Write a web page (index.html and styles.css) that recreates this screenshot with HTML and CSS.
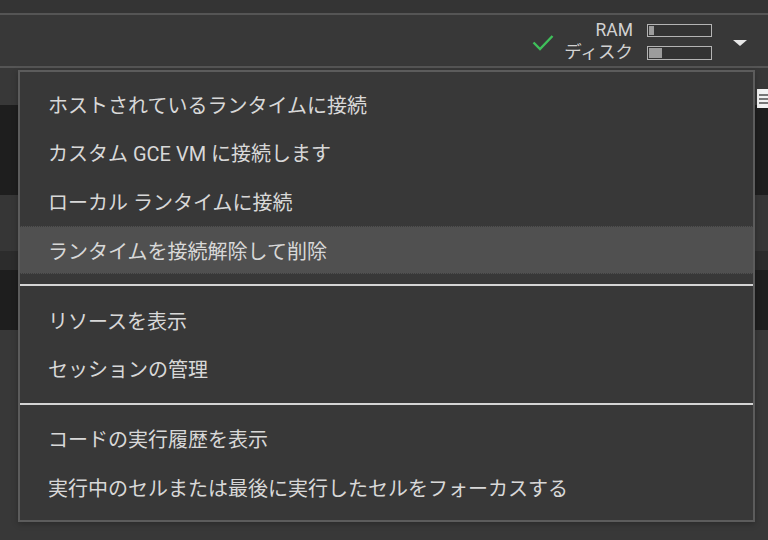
FILE: index.html
```html
<!DOCTYPE html>
<html lang="ja">
<head>
    <meta charset="UTF-8">
    <meta name="viewport" content="width=device-width, initial-scale=1.0">
    <title>ランタイム メニュー</title>
    <link rel="stylesheet" href="styles.css">
</head>
<body>
    <div class="top-strip"></div>
    <header class="toolbar">
        <svg class="status-check" width="22" height="18" viewBox="0 0 22 18">
            <polyline points="1.5,8.5 8,15 20.5,2" fill="none" stroke="#3fbf5a" stroke-width="2.4"/>
        </svg>
        <div class="resources">
            <span class="res-label">RAM</span>
            <div class="res-bar"><div class="res-fill" style="width: 5px"></div></div>
            <span class="res-label">ディスク</span>
            <div class="res-bar"><div class="res-fill" style="width: 13px"></div></div>
        </div>
        <div class="drop-arrow"></div>
    </header>

    <main class="notebook">
        <div class="row row-top">
            <div class="side-icon"><span></span><span></span><span></span></div>
        </div>
        <div class="row cell-dark cell-a"></div>
        <div class="row row-mid"></div>
        <div class="row row-band"></div>
        <div class="row cell-dark cell-b"></div>
    </main>

    <div class="menu">
        <div class="menu-item">ホストされているランタイムに接続</div>
        <div class="menu-item">カスタム GCE VM に接続します</div>
        <div class="menu-item">ローカル ランタイムに接続</div>
        <div class="menu-item active">ランタイムを接続解除して削除</div>
        <div class="menu-sep"></div>
        <div class="menu-item">リソースを表示</div>
        <div class="menu-item">セッションの管理</div>
        <div class="menu-sep"></div>
        <div class="menu-item">コードの実行履歴を表示</div>
        <div class="menu-item">実行中のセルまたは最後に実行したセルをフォーカスする</div>
    </div>
</body>
</html>
```

FILE: styles.css
```css
body {
    margin: 0;
    background-color: #383838;
    font-family: Roboto, "Noto Sans CJK JP", sans-serif;
    color: #d6d6d6;
    overflow: hidden;
}
.top-strip {
    height: 13px;
    background: #343434;
    border-bottom: 2px solid #555;
}
.toolbar {
    height: 53px;
    box-sizing: border-box;
    padding: 2px 21px 0 0;
    background: #383838;
    border-bottom: 2px solid #555;
    display: flex;
    justify-content: flex-end;
    align-items: center;
}
.status-check {
    margin-right: 10px;
    margin-top: 2px;
}
.resources {
    display: grid;
    grid-template-columns: auto 65px;
    grid-auto-rows: 22.5px;
    column-gap: 14px;
    align-items: center;
}
.res-label {
    font-size: 17.5px;
    text-align: right;
    color: #d2d2d2;
    line-height: 1;
}
.res-bar {
    height: 13.5px;
    box-sizing: border-box;
    border: 1.5px solid #b4b4b4;
    background: #333;
    padding: 1px;
}
.res-fill {
    height: 100%;
    background: #9c9c9c;
}
.drop-arrow {
    margin-left: 21px;
    width: 0;
    height: 0;
    border-left: 7px solid transparent;
    border-right: 7px solid transparent;
    border-top: 6px solid #e8e8e8;
    margin-top: 2px;
}
.row-top {
    height: 37px;
    display: flex;
    justify-content: flex-end;
    align-items: flex-end;
}
.side-icon {
    width: 11px;
    height: 19px;
    margin-bottom: -3px;
    background: #f2f2f2;
    display: flex;
    flex-direction: column;
    justify-content: center;
    gap: 2px;
    padding-left: 2px;
    box-sizing: border-box;
}
.side-icon span {
    height: 2px;
    background: #777;
}
.cell-dark {
    background: #1e1e1e;
}
.cell-a {
    height: 90px;
}
.row-mid {
    height: 56px;
    background: #363636;
}
.row-band {
    height: 19px;
    background: #2c2c2c;
}
.cell-b {
    height: 60px;
}
.menu {
    position: absolute;
    left: 18px;
    top: 70px;
    width: 737px;
    box-sizing: border-box;
    padding: 8px 0;
    background: #383838;
    border: 2px solid #5c5c5c;
    box-shadow: 0 2px 6px rgba(0, 0, 0, 0.25);
}
.menu-item {
    height: 48.6px;
    box-sizing: border-box;
    display: flex;
    align-items: center;
    padding-left: 28px;
    font-size: 20px;
    color: #d8d8d8;
    white-space: nowrap;
}
.menu-item.active {
    background: #505050;
    border-top: 1px dotted #3c3c3c;
    border-bottom: 1px dotted #3c3c3c;
}
.menu-sep {
    height: 1.5px;
    margin: 10px 0;
    background: #d4d4d4;
}
```
